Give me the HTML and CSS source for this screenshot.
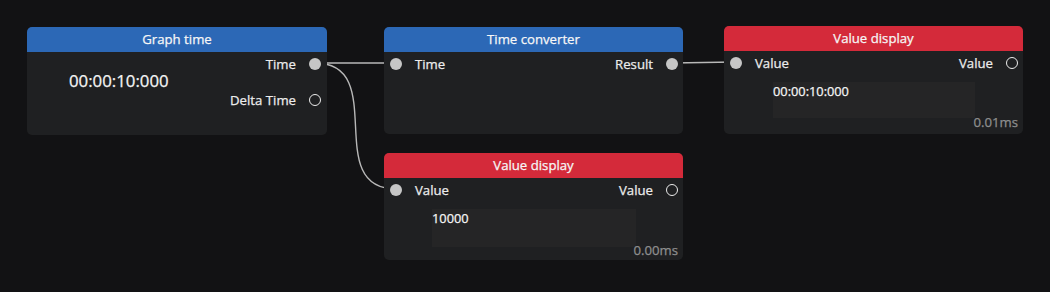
FILE: index.html
```html
<!DOCTYPE html>
<html>
<head>
<meta charset="utf-8">
<link rel="stylesheet" href="styles.css">
</head>
<body>
<div class="canvas">
  <svg class="wires" width="1050" height="292" viewBox="0 0 1050 292">
    <path d="M315 63 L396 63" />
    <path d="M315 63 C390 63 321 189 396 189" />
    <path d="M672 63 L735 62" />
  </svg>

  <div class="node node-graph">
    <div class="head blue">Graph time</div>
    <div class="body graph-body">
      <div class="big-value">00:00:10:000</div>
      <div class="outputs">
        <div class="port-row out"><span class="label">Time</span><span class="dot filled"></span></div>
        <div class="port-row out"><span class="label">Delta Time</span><span class="dot hollow"></span></div>
      </div>
    </div>
  </div>

  <div class="node node-conv">
    <div class="head blue">Time converter</div>
    <div class="body">
      <div class="port-row both">
        <span class="dot filled"></span><span class="label in-label">Time</span>
        <span class="spacer"></span>
        <span class="label out-label">Result</span><span class="dot filled"></span>
      </div>
    </div>
  </div>

  <div class="node node-disp1">
    <div class="head red">Value display</div>
    <div class="body">
      <div class="port-row both">
        <span class="dot filled"></span><span class="label in-label">Value</span>
        <span class="spacer"></span>
        <span class="label out-label">Value</span><span class="dot hollow"></span>
      </div>
      <div class="value-box">00:00:10:000</div>
      <div class="timing">0.01ms</div>
    </div>
  </div>

  <div class="node node-disp2">
    <div class="head red">Value display</div>
    <div class="body">
      <div class="port-row both">
        <span class="dot filled"></span><span class="label in-label">Value</span>
        <span class="spacer"></span>
        <span class="label out-label">Value</span><span class="dot hollow"></span>
      </div>
      <div class="value-box">10000</div>
      <div class="timing">0.00ms</div>
    </div>
  </div>
</div>
</body>
</html>
```

FILE: styles.css
```css
* { box-sizing: border-box; }
html, body {
  margin: 0;
  padding: 0;
  background: #121214;
  font-family: "Open Sans", "Noto Sans", sans-serif;
}
.canvas {
  position: relative;
  width: 1050px;
  height: 292px;
  background: #121214;
  overflow: hidden;
}
.wires {
  position: absolute;
  left: 0;
  top: 0;
}
.wires path {
  fill: none;
  stroke: #b8b8b8;
  stroke-width: 1.4;
}
.node {
  position: absolute;
  background: #1f2022;
  border-radius: 5px;
  display: flex;
  flex-direction: column;
  overflow: hidden;
  -webkit-text-stroke: 0.25px currentColor;
}
.node-graph { left: 27px; top: 27px; width: 300px; height: 108px; }
.node-conv  { left: 384px; top: 27px; width: 299px; height: 107px; }
.node-disp1 { left: 724px; top: 26px; width: 299px; height: 108px; }
.node-disp2 { left: 384px; top: 153px; width: 299px; height: 107px; }

.head {
  height: 25px;
  line-height: 25px;
  text-align: center;
  color: #f6f6f6;
  font-size: 13.2px;
  font-weight: 500;
}
.blue { background: #2c68b6; }
.red { background: #d42a3a; }

.body {
  flex: 1;
  display: flex;
  flex-direction: column;
}
.port-row {
  height: 24px;
  display: flex;
  align-items: center;
  font-size: 13.2px;
  font-weight: 500;
  color: #ececec;
}
.port-row.both { padding: 0 5px 0 6px; }
.in-label { margin-left: 13px; }
.out-label { margin-right: 13px; }
.spacer { flex: 1; }
.dot {
  width: 12px;
  height: 12px;
  border-radius: 50%;
  flex: none;
}
.dot.filled { background: #c6c6c6; }
.dot.hollow { border: 1.6px solid #ececec; }

.graph-body {
  flex-direction: row;
  align-items: stretch;
}
.big-value {
  flex: 1;
  display: flex;
  align-items: center;
  padding-left: 42px;
  padding-bottom: 27px;
  font-size: 16.8px;
  font-weight: 500;
  color: #f4f4f4;
}
.outputs {
  display: flex;
  flex-direction: column;
  gap: 12px;
  padding-right: 6px;
}
.port-row.out { justify-content: flex-end; }
.port-row.out .dot { margin-left: 13px; }

.value-box {
  margin: 7px 0 0 49px;
  width: 202px;
  height: 36px;
  background: #252526;
  color: #f4f4f4;
  font-size: 12.8px;
  font-weight: 500;
  line-height: 18px;
}
.node-disp2 .value-box {
  margin-left: 48px;
  width: 204px;
  height: 38px;
}
.timing {
  text-align: right;
  padding-right: 5px;
  font-size: 13.2px;
  line-height: 16px;
  color: #8e8e8e;
  margin-top: -4px;
}
.node-disp2 .timing { margin-top: -5px; }
```
